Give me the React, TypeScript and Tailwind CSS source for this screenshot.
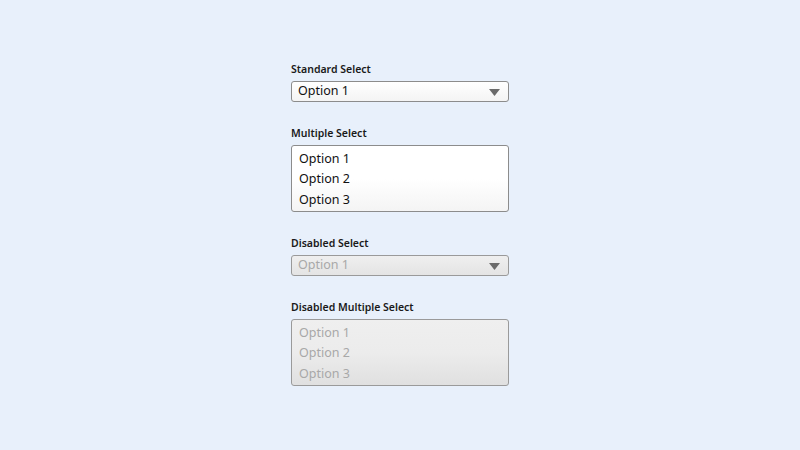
import React from "react";

const Arrow = ({ color }: { color: string }) => (
  <svg width="11" height="7" viewBox="0 0 11 7" className="absolute right-[8px] top-[7px]">
    <path d="M0 0 L11 0 L5.5 7 Z" fill={color} />
  </svg>
);

const font = { fontFamily: '"Noto Sans", "Open Sans", sans-serif' };

export default function App() {
  return (
    <div className="w-[800px] h-[450px] bg-[#e8f0fb] flex items-center justify-center" style={font}>
      <div className="w-[218px] flex flex-col gap-[24px] -mt-[3px]">
        <div className="flex flex-col">
          <div className="text-[10.5px] leading-[14px] font-semibold text-[#1a1a1a] mb-[5px]">Standard Select</div>
          <div className="relative h-[21px] rounded-[3px] border border-[#8c8c8c] bg-gradient-to-b from-white to-[#f4f4f4] flex items-center pl-[6px] pt-[1px] text-[12.5px] text-[#111]">
            Option 1
            <Arrow color="#6b6b6b" />
          </div>
        </div>
        <div className="flex flex-col">
          <div className="text-[10.5px] leading-[14px] font-semibold text-[#1a1a1a] mb-[5px]">Multiple Select</div>
          <div className="h-[67px] rounded-[3px] border border-[#8c8c8c] bg-gradient-to-b from-white via-white to-[#f4f4f4] flex flex-col pt-[3px] pl-[7px] text-[12.5px] leading-[20.5px] text-[#111]">
            <div>Option 1</div>
            <div>Option 2</div>
            <div>Option 3</div>
          </div>
        </div>
        <div className="flex flex-col">
          <div className="text-[10.5px] leading-[14px] font-semibold text-[#1a1a1a] mb-[5px]">Disabled Select</div>
          <div className="relative h-[21px] rounded-[3px] border border-[#9a9a9a] bg-gradient-to-b from-[#efefef] to-[#e4e4e4] flex items-center pl-[6px] pt-[1px] text-[12.5px] text-[#a8a8a8]">
            Option 1
            <Arrow color="#6b6b6b" />
          </div>
        </div>
        <div className="flex flex-col">
          <div className="text-[10.5px] leading-[14px] font-semibold text-[#1a1a1a] mb-[5px]">Disabled Multiple Select</div>
          <div className="h-[67px] rounded-[3px] border border-[#9a9a9a] bg-gradient-to-b from-[#efefef] via-[#ececec] to-[#e0e0e0] flex flex-col pt-[3px] pl-[7px] text-[12.5px] leading-[20.5px] text-[#a8a8a8]">
            <div>Option 1</div>
            <div>Option 2</div>
            <div>Option 3</div>
          </div>
        </div>
      </div>
    </div>
  );
}
